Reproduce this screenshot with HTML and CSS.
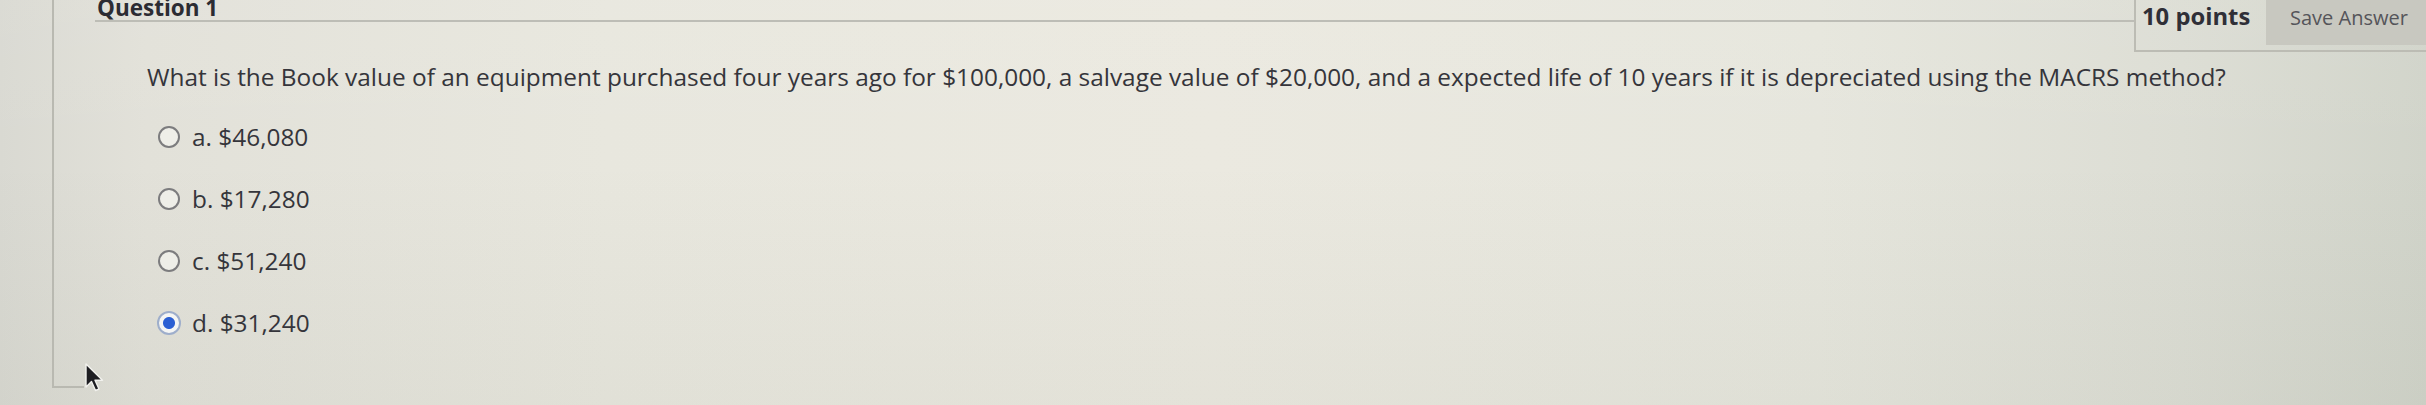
FILE: index.html
```html
<!DOCTYPE html>
<html>
<head>
<meta charset="utf-8">
<link rel="stylesheet" href="styles.css">
</head>
<body>
<div class="screen">
  <div class="frame">
    <div class="header">
      <div class="title">Question 1</div>
      <div class="meta">
        <div class="points">10 points</div>
        <div class="save">Save Answer</div>
      </div>
    </div>
    <div class="question">What is the Book value of an equipment purchased four years ago for $100,000, a salvage value of $20,000, and a expected life of 10 years if it is depreciated using the MACRS method?</div>
    <div class="options">
      <label class="option"><span class="radio"></span><span class="opt-text">a. $46,080</span></label>
      <label class="option"><span class="radio"></span><span class="opt-text">b. $17,280</span></label>
      <label class="option"><span class="radio"></span><span class="opt-text">c. $51,240</span></label>
      <label class="option"><span class="radio checked"></span><span class="opt-text">d. $31,240</span></label>
    </div>
    <svg class="cursor" width="20" height="30" viewBox="0 0 20 30">
      <path d="M2 1 L2 24 L7.5 18.5 L11.5 27.5 L15 26 L11 17.2 L18.5 17.2 Z" fill="#1e1e22" stroke="#f2f2ee" stroke-width="1.4" stroke-linejoin="round"/>
    </svg>
  </div>
</div>
</body>
</html>
```
FILE: styles.css
```css
html, body {
  margin: 0;
  padding: 0;
}
body {
  width: 2426px;
  height: 405px;
  overflow: hidden;
  font-family: "Open Sans", "Noto Sans", sans-serif;
}
.screen {
  width: 2426px;
  height: 405px;
  overflow: hidden;
  background:
    linear-gradient(to bottom, rgba(255,255,255,0.05) 0%, rgba(0,0,0,0) 40%, rgba(90,100,80,0.05) 100%),
    linear-gradient(to right, #d9d9d2 0%, #e2e1d9 6%, #e8e7de 25%, #ebe9e0 50%, #e6e6dd 75%, #dcddd4 90%, #d1d4ca 100%);
}
.frame {
  position: relative;
  margin-left: 52px;
  height: 386px;
  border-left: 2px solid #b9b9b1;
  box-sizing: border-box;
}
.frame::after {
  content: "";
  position: absolute;
  left: -2px;
  bottom: -2px;
  width: 32px;
  height: 2px;
  background: #b9b9b1;
}
.header {
  display: flex;
  align-items: flex-start;
  height: 52px;
}
.title {
  flex: 1;
  margin-left: 41px;
  margin-top: -5px;
  padding-left: 2px;
  font-size: 22.5px;
  line-height: 25px;
  font-weight: 700;
  color: #2c2c33;
  border-bottom: 2px solid #bdbdb6;
}
.meta {
  display: flex;
  align-items: flex-start;
  height: 52px;
  box-sizing: border-box;
  border-left: 2px solid #bcbcb4;
  border-bottom: 2px solid #bcbcb4;
}
.points {
  width: 124px;
  padding-left: 6px;
  font-size: 23.8px;
  line-height: 30px;
  font-weight: 700;
  color: #2f2f37;
  margin-top: 1px;
}
.save {
  width: 160px;
  height: 45px;
  box-sizing: border-box;
  padding-left: 24px;
  padding-top: 5px;
  background: #c8c8c0;
  font-size: 20px;
  line-height: 26px;
  color: #55555a;
}
.question {
  margin-top: 10px;
  padding-left: 93px;
  font-size: 24.4px;
  line-height: 30px;
  color: #35353b;
  white-space: nowrap;
}
.options {
  margin-top: 14px;
  padding-left: 104px;
  display: flex;
  flex-direction: column;
}
.option {
  display: flex;
  align-items: center;
  height: 62px;
  gap: 12px;
  font-size: 24.4px;
  line-height: 62px;
  color: #35353b;
}
.radio {
  width: 22px;
  height: 22px;
  box-sizing: border-box;
  border-radius: 50%;
  border: 2px solid #7c7c7e;
  background: #eeeee8;
  flex: none;
}
.radio.checked {
  width: 24px;
  height: 24px;
  margin-left: -1px;
  margin-right: -1px;
  border: 2.5px solid #9eaecb;
  background: radial-gradient(circle, #2b5fd3 0 5.5px, #f4f5f4 6.5px 100%);
}
.cursor {
  position: absolute;
  left: 30px;
  top: 363px;
}
```
